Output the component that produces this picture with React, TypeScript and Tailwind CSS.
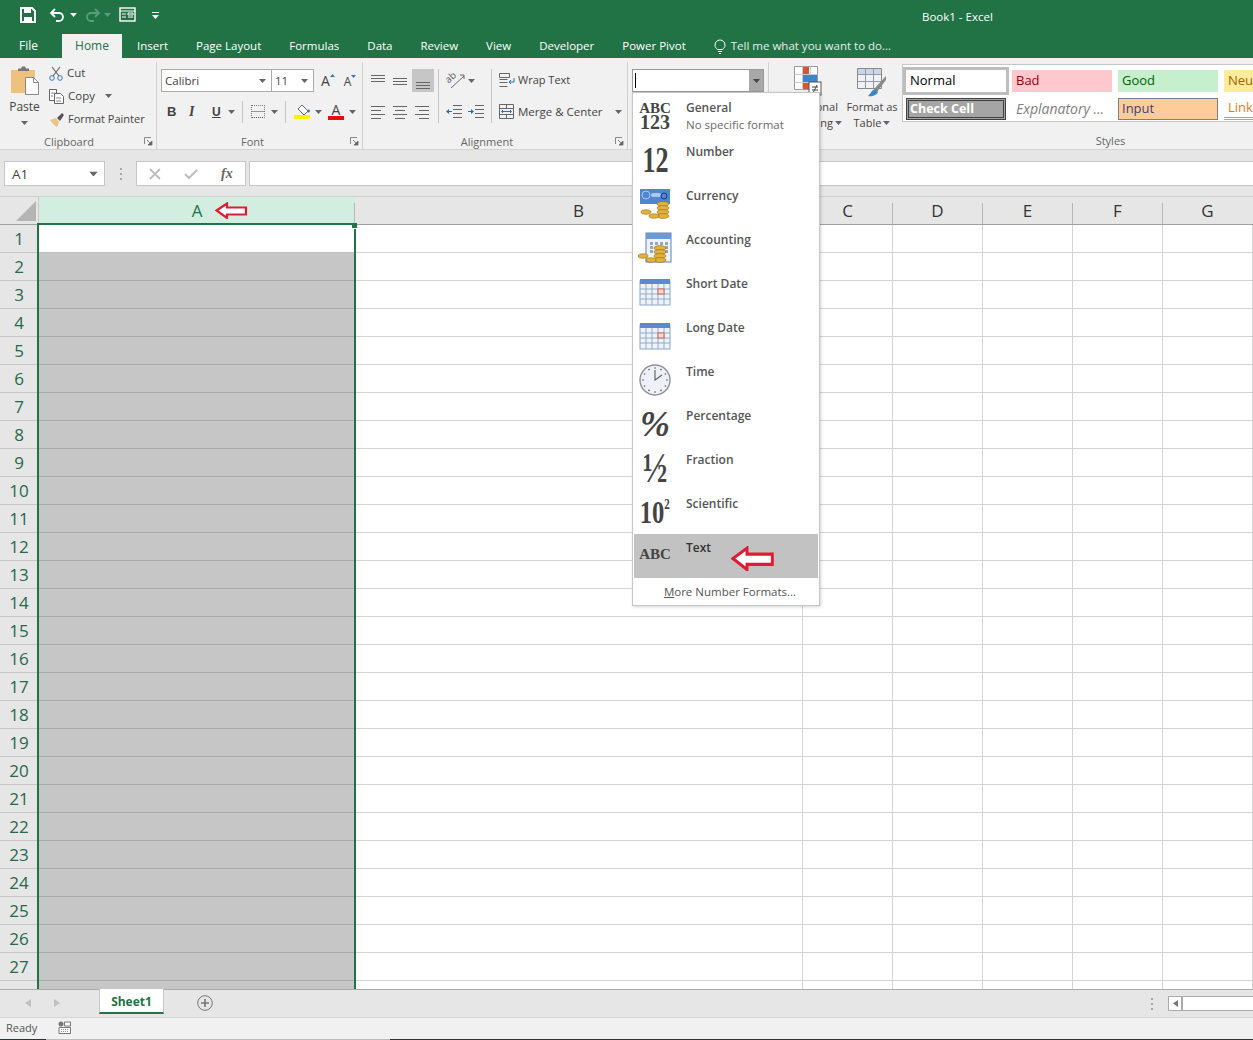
import React from "react";

const font = "font-['Open_Sans','Noto_Sans',sans-serif]";
const tabs = ["Insert","Page Layout","Formulas","Data","Review","View","Developer","Power Pivot"];

function Caret({ className = "", color = "#666" }: { className?: string; color?: string }) {
  return (
    <svg width="7" height="4" viewBox="0 0 7 4" className={className}><path d="M0 0h7L3.500 4z" fill={color} /></svg>
  );
}

function Launcher() {
  return (
    <svg width="9" height="9" viewBox="0 0 9 9" className="shrink-0">
      <path d="M.5 7V.5H7" fill="none" stroke="#888" />
      <path d="M3 3l4 4M8 4v4H4z" fill="#666" stroke="#666" strokeWidth=".8" />
    </svg>
  );
}

function Lines({ kind }: { kind: "t" | "m" | "b" | "l" | "c" | "r" }) {
  const ys = kind === "t" ? [2, 5, 8] : kind === "m" ? [5, 8, 11] : kind === "b" ? [9, 12, 15] : [2, 6, 10, 14];
  return (
    <svg width="15" height="16" viewBox="0 0 15 16">
      {ys.map((y, i) => {
        let x1 = 0, x2 = 14;
        if (kind === "l" && i % 2) x2 = 10;
        if (kind === "c" && i % 2) { x1 = 2; x2 = 12; }
        if (kind === "r" && i % 2) x1 = 4;
        return <line key={y} x1={x1} x2={x2} y1={y + 0.5} y2={y + 0.5} stroke="#666" />;
      })}
    </svg>
  );
}

function Indent({ flip }: { flip?: boolean }) {
  return (
    <svg width="17" height="14" viewBox="0 0 17 14">
      {[0.5, 4.5, 8.5, 12.5].map((y) => <line key={y} x1="7" x2="16" y1={y} y2={y} stroke="#666" />)}
      <path d={flip ? "M0 6h3V4l3 2.500L3 9V7H0z" : "M6 6H3V4L0 6.500 3 9V7h3z"} fill="#2a6fb8" />
    </svg>
  );
}

function PasteIcon() {
  return (
    <svg width="30" height="32" viewBox="0 0 30 32">
      <rect x="1" y="4" width="24" height="23" fill="#ecc27d" />
      <path d="M8 5V2.500h3L12 .5h3l1 2h3V5z" fill="#77777a" />
      <path d="M15.500 11.500h8l5 5v12h-13z" fill="#fff" stroke="#888" />
      <path d="M23.500 11.500v5h5" fill="none" stroke="#888" />
    </svg>
  );
}

function CalendarIcon() {
  return (
    <svg width="32" height="28" viewBox="0 0 32 28">
      <rect x="1" y="3" width="30" height="24" fill="#eef3fa" stroke="#8ea6c4" />
      <rect x="1" y="1" width="30" height="5" fill="#5b8ad0" />
      {[7, 13, 19, 25].map((x) => <line key={x} x1={x} x2={x} y1="6" y2="27" stroke="#94a9c4" />)}
      {[11, 16, 21].map((y) => <line key={y} x1="1" x2="31" y1={y} y2={y} stroke="#94a9c4" />)}
      <rect x="19" y="11" width="6" height="5" fill="#fbdcd6" stroke="#d2634f" />
    </svg>
  );
}

function Coins({ x, y }: { x: number; y: number }) {
  return (
    <g transform={`translate(${x} ${y})`}>
      {[0, 4, 8, 12].map((d) => <ellipse key={d} cx="22" cy={2 + d} rx="6" ry="2.400" fill="#e3b23c" stroke="#8f6b12" strokeWidth=".6" />)}
      <ellipse cx="5" cy="10" rx="5" ry="2.200" fill="#e3b23c" stroke="#8f6b12" strokeWidth=".6" />
      <ellipse cx="13" cy="14" rx="5" ry="2.200" fill="#e3b23c" stroke="#8f6b12" strokeWidth=".6" />
    </g>
  );
}

function CurrencyIcon() {
  return (
    <svg width="32" height="32" viewBox="0 0 32 32">
      <rect x="1" y="1" width="30" height="15" fill="#4f86cf" />
      <circle cx="7" cy="7" r="4" fill="none" stroke="#a9c8ef" />
      <rect x="12" y="5" width="10" height="4" rx="2" fill="#a9c8ef" />
      <circle cx="25" cy="8" r="3" fill="none" stroke="#123f7f" />
      <Coins x={2} y={14} />
    </svg>
  );
}

function AccountingIcon() {
  return (
    <svg width="34" height="32" viewBox="0 0 34 32">
      <rect x="8" y="1" width="25" height="29" fill="#eef3fa" stroke="#5b82b8" />
      <rect x="8" y="1" width="25" height="6" fill="#6c98d6" />
      {[10, 14, 18].map((y) => [12, 17, 22, 27].map((x) => <rect key={`${x}${y}`} x={x} y={y} width="3" height="3" fill="#97a6b8" />))}
      <Coins x={0} y={14} />
    </svg>
  );
}

function ClockIcon() {
  const ticks = [0, 30, 60, 90, 120, 150, 180, 210, 240, 270, 300, 330];
  return (
    <svg width="32" height="32" viewBox="0 0 32 32">
      <circle cx="16" cy="16" r="15" fill="#eef2f8" stroke="#8b8f96" strokeWidth="1.400" />
      {ticks.map((a) => <circle key={a} cx={16 + 12 * Math.sin((a * Math.PI) / 180)} cy={16 - 12 * Math.cos((a * Math.PI) / 180)} r=".8" fill="#555" />)}
      <path d="M16 6v10l7-5" fill="none" stroke="#666" strokeWidth="1.200" />
    </svg>
  );
}

function Arrow({ w, h }: { w: number; h: number }) {
  return (
    <svg width={w} height={h} viewBox="0 0 33 17" preserveAspectRatio="none" className="block">
      <path d="M1.500 8.500L12 1.500v4h19v7H12v3.500z" fill="#fff" stroke="#dc1e32" strokeWidth="2.200" />
    </svg>
  );
}

const serifIcon = "font-['Liberation_Serif',serif] font-bold text-[#444]";

const menu: { name: string; sub?: string; icon: React.ReactNode }[] = [
  { name: "General", sub: "No specific format", icon: <div className={`${serifIcon} text-[15px] leading-[14px] text-center -mt-[1px]`}>ABC<br /><span className="text-[20px] leading-[15px]">123</span></div> },
  { name: "Number", icon: <span className={`${serifIcon} text-[29px] leading-none scale-x-90 scale-y-125`}>12</span> },
  { name: "Currency", icon: <CurrencyIcon /> },
  { name: "Accounting", icon: <AccountingIcon /> },
  { name: "Short Date", icon: <CalendarIcon /> },
  { name: "Long Date", icon: <CalendarIcon /> },
  { name: "Time", icon: <ClockIcon /> },
  { name: "Percentage", icon: <span className={`${serifIcon} italic text-[36px] leading-none`}>%</span> },
  { name: "Fraction", icon: <span className={`${serifIcon} text-[33px] leading-none scale-y-125`}>½</span> },
  { name: "Scientific", icon: <span className={`${serifIcon} text-[29px] leading-none scale-x-[.85] scale-y-110`}>10<sup className="text-[13px] -top-[13px]">2</sup></span> },
];

function MenuItem({ item, active }: { item: (typeof menu)[number]; active?: boolean }) {
  return (
    <div className={`h-[44px] flex items-start pl-[4px] ${active ? "bg-[#c2c2c2]" : ""}`}>
      <div className="w-[34px] h-[44px] flex items-center justify-center shrink-0">{item.icon}</div>
      <div className="ml-[14px] pt-[5px] text-[12px] leading-[17px]">
        <div className={`font-semibold ${active ? "text-[#333]" : "text-[#555]"}`}>{item.name}</div>
        {item.sub && <div className="text-[#6a6a6a] text-[11.500px]">{item.sub}</div>}
      </div>
    </div>
  );
}

function Sep({ className = "h-[24px]" }: { className?: string }) {
  return <div className={`w-px bg-[#c6c6c6] shrink-0 ${className}`} />;
}

function GroupLabel({ text, pad }: { text: string; pad: string }) {
  return (
    <div className={`relative h-[16px] flex items-center justify-center text-[11px] text-[#666] pt-[2px] ${pad}`}>
      {text}
      <span className="absolute right-[3px] top-[4px]"><Launcher /></span>
    </div>
  );
}

function StyleCell({ text, className }: { text: string; className: string }) {
  return <div className={`w-[100px] h-[22px] shrink-0 flex items-center px-[4px] text-[13px] whitespace-nowrap overflow-hidden ${className}`}>{text}</div>;
}

const colWidths = [
  { n: "B", w: 448 }, { n: "C", w: 90 }, { n: "D", w: 90 }, { n: "E", w: 90 }, { n: "F", w: 90 }, { n: "G", w: 90 },
];

export default function App() {
  const rows = Array.from({ length: 28 }, (_, i) => i + 1);
  return (
    <div className={`${font} w-[1253px] h-[1040px] flex flex-col overflow-hidden bg-white relative text-[#444]`}>
      {/* title bar */}
      <div className="h-[34px] bg-[#217346] flex items-center shrink-0 text-white relative">
        <svg width="16" height="16" viewBox="0 0 16 16" className="ml-[20px] -mt-[5px]">
          <path d="M1 1h11l3 3v11H1z" fill="none" stroke="#fff" strokeWidth="2" />
          <rect x="4" y="1" width="7" height="5" fill="#fff" />
          <rect x="4" y="10" width="8" height="5" fill="#fff" />
        </svg>
        <svg width="15" height="14" viewBox="0 0 15 14" className="ml-[14px] -mt-[5px]">
          <path d="M5 1L1 5l4 4M1 5h8a4 4 0 0 1 0 8H6" fill="none" stroke="#fff" strokeWidth="1.800" />
        </svg>
        <Caret color="#fff" className="ml-[5px] -mt-[5px]" />
        <svg width="15" height="14" viewBox="0 0 15 14" className="ml-[8px] -mt-[5px]">
          <path d="M10 1l4 4-4 4M14 5H6a4 4 0 0 0 0 8h3" fill="none" stroke="#5c9b7c" strokeWidth="1.800" />
        </svg>
        <Caret color="#5c9b7c" className="ml-[4px] -mt-[5px]" />
        <svg width="17" height="15" viewBox="0 0 17 15" className="ml-[8px] -mt-[5px]">
          <rect x="1" y="1" width="15" height="13" fill="none" stroke="#fff" strokeWidth="1.400" />
          <path d="M1 4h15M3 7h4M3 10h4M9 6h5v2H9zM9 10h5" stroke="#fff" fill="none" />
        </svg>
        <svg width="7" height="7" viewBox="0 0 7 7" className="ml-[16px] -mt-[3px]">
          <path d="M0 0h7v1H0zM0 3h7L3.500 7z" fill="#fff" />
        </svg>
        <span className="absolute left-[922px] top-[10px] text-[11.500px] leading-[14px]">Book1 - Excel</span>
      </div>
      {/* tabs */}
      <div className="h-[24px] bg-[#217346] flex items-end text-white text-[11.500px] shrink-0 relative">
        <div className="w-[62px] pl-[19px] h-[24px] flex items-center text-[12px]">File</div>
        <div className="w-[60px] h-[24px] bg-[#f1f1f1] text-[#217346] flex items-center justify-center text-[12px]">Home</div>
        <div className="flex h-[24px] items-center ml-[15px] gap-[28px]">
          {tabs.map((t) => <span key={t}>{t}</span>)}
        </div>
        <div className="flex items-center h-[24px] ml-[28px] gap-[5px]">
          <svg width="12" height="15" viewBox="0 0 12 15"><path d="M3.500 10.500C2 9 1 8 1 6a5 5 0 0 1 10 0c0 2-1 3-2.500 4.500zM4 12.500h4M5 14.500h2" fill="none" stroke="#fff" /></svg>
          <span className="text-[#e4efe9]">Tell me what you want to do...</span>
        </div>
      </div>
      {/* ribbon */}
      <div className="h-[92px] bg-[#f1f1f1] flex shrink-0 border-b border-[#d4d4d4] text-[11.500px] relative">
        {/* clipboard */}
        <div className="w-[157px] shrink-0 border-r border-[#d0d0d0] mt-[4px] flex flex-col">
          <div className="flex-1 flex">
            <div className="w-[49px] flex flex-col items-center">
              <div className="mt-[4px]"><PasteIcon /></div>
              <div className="mt-[1px] leading-[16px] text-[12px]">Paste</div>
              <Caret className="mt-[6px]" />
            </div>
            <div className="flex flex-col pt-[2px] gap-[5px] leading-[18px]">
              <div className="flex items-center gap-[4px]">
                <svg width="14" height="15" viewBox="0 0 14 15"><path d="M3 1l7 9M11 1l-7 9" stroke="#666" strokeWidth="1.200" /><circle cx="3" cy="12" r="2.300" fill="none" stroke="#3a78b8" /><circle cx="11" cy="12" r="2.300" fill="none" stroke="#3a78b8" /></svg>
                <span>Cut</span>
              </div>
              <div className="flex items-center gap-[4px]">
                <svg width="15" height="15" viewBox="0 0 15 15"><path d="M.5.500h7v11h-7z" fill="#fff" stroke="#666" /><path d="M5.500 4.500h6l3 3v7h-9z" fill="#fff" stroke="#666" /><path d="M2 4h4M2 7h2M7 9h5M7 12h5" stroke="#888" /></svg>
                <span>Copy</span>
                <Caret className="ml-[6px]" />
              </div>
              <div className="flex items-center gap-[3px]">
                <svg width="16" height="15" viewBox="0 0 16 15"><path d="M1 8l6-2 3 4-2 5c-2-1-5-4-7-7z" fill="#e7c587" /><path d="M8 6l5-5 2 2-4 6z" fill="#555" /></svg>
                <span className="whitespace-nowrap text-[11px]">Format Painter</span>
              </div>
            </div>
          </div>
          <GroupLabel text="Clipboard" pad="pr-[18px]" />
        </div>
        {/* font */}
        <div className="w-[206px] shrink-0 border-r border-[#d0d0d0] mt-[4px] flex flex-col">
          <div className="flex-1 pl-[4px] pt-[7px]">
            <div className="flex items-center">
              <div className="w-[111px] h-[23px] bg-white border border-[#ababab] flex items-center justify-between px-[3px]">
                <span>Calibri</span><Caret className="mr-[2px]" />
              </div>
              <div className="w-[43px] h-[23px] bg-white border border-[#ababab] -ml-px flex items-center justify-between px-[3px]">
                <span>11</span><Caret className="mr-[2px]" />
              </div>
              <span className="ml-[7px] text-[14px] leading-none relative">A<svg width="5" height="3" viewBox="0 0 5 3" className="absolute -right-[5px] top-0"><path d="M0 3h5L2.500 0z" fill="#3a78b8" /></svg></span>
              <span className="ml-[14px] text-[12px] leading-none relative top-[1px]">A<svg width="5" height="3" viewBox="0 0 5 3" className="absolute -right-[5px] -top-[1px]"><path d="M0 0h5L2.500 3z" fill="#3a78b8" /></svg></span>
            </div>
            <div className="flex items-center mt-[8px] h-[23px] pl-[6px]">
              <span className="font-['Liberation_Sans',sans-serif] font-bold text-[13px] w-[22px]">B</span>
              <span className="font-['Liberation_Serif',serif] font-bold italic text-[14px] w-[23px]">I</span>
              <span className="font-['Liberation_Sans',sans-serif] font-bold text-[12px] underline w-[16px]">U</span>
              <Caret />
              <Sep className="h-[22px] ml-[7px]" />
              <div className="ml-[8px] w-[14px] h-[13px] border border-dotted border-[#777] border-b-[#555] bg-[linear-gradient(#999,#999)] bg-[length:100%_1px] bg-center bg-no-repeat" />
              <Caret className="ml-[6px]" />
              <Sep className="h-[22px] ml-[7px]" />
              <div className="ml-[8px] flex flex-col items-center w-[16px]">
                <svg width="15" height="11" viewBox="0 0 15 11"><path d="M7 1l6 6-4 4-6-6z" fill="#fff" stroke="#666" /><circle cx="13.500" cy="7" r="1.500" fill="#3a78b8" /></svg>
                <div className="w-[16px] h-[4px] bg-[#fff200]" />
              </div>
              <Caret className="ml-[5px]" />
              <div className="ml-[6px] flex flex-col items-center w-[16px] leading-[11px]">
                <span className="text-[14px] leading-[12px]">A</span>
                <div className="w-[16px] h-[4px] bg-[#e01010]" />
              </div>
              <Caret className="ml-[5px]" />
            </div>
          </div>
          <GroupLabel text="Font" pad="pr-[14px]" />
        </div>
        {/* alignment */}
        <div className="w-[265px] shrink-0 border-r border-[#d0d0d0] mt-[4px] flex flex-col">
          <div className="flex-1 pl-[8px] pt-[7px] flex">
            <div className="flex flex-col gap-[8px] w-[72px]">
              <div className="flex items-center h-[23px] gap-[7px]">
                <Lines kind="t" /><Lines kind="m" />
                <div className="bg-[#c6c6c6] w-[22px] h-[23px] flex items-center justify-center -ml-[3px]"><Lines kind="b" /></div>
              </div>
              <div className="flex items-center h-[23px] gap-[7px]">
                <Lines kind="l" /><Lines kind="c" /><Lines kind="r" />
              </div>
            </div>
            <Sep className="h-[54px] -ml-[5px]" />
            <div className="flex flex-col gap-[8px] w-[52px] pl-[7px]">
              <div className="flex items-center h-[23px] gap-[3px]">
                <svg width="19" height="16" viewBox="0 0 19 16" overflow="visible"><path d="M5 15L18 3" stroke="#666" /><path d="M14 2h4v4" fill="none" stroke="#666" /><text x="0" y="0" fontSize="9.500" fill="#555" transform="translate(2.500 10.500) rotate(-42)" fontFamily="Open Sans">ab</text></svg>
                <Caret />
              </div>
              <div className="flex items-center h-[23px] gap-[5px]"><Indent /><Indent flip /></div>
            </div>
            <Sep className="h-[54px]" />
            <div className="flex flex-col gap-[8px] pl-[7px]">
              <div className="flex items-center h-[23px] gap-[3px]">
                <svg width="16" height="15" viewBox="0 0 16 15"><path d="M.5.500h10v4H.5zM.5 6.500h8M.5 9.500h8M.5 13.500h8" fill="none" stroke="#666" /><path d="M15 5v4h-5M12 7l-2 2 2 2" fill="none" stroke="#2a6fb8" /></svg>
                <span className="text-[11px]">Wrap Text</span>
              </div>
              <div className="flex items-center h-[23px] gap-[3px]">
                <svg width="16" height="15" viewBox="0 0 16 15"><path d="M.5.500h14v14H.5zM.5 4.500h14M.5 10.500h14M7.500.500v4M7.500 10.500v4" fill="none" stroke="#666" /><path d="M3 7.500h9M4 6l-1.500 1.500L4 9M11 6l1.500 1.500L11 9" fill="none" stroke="#2a6fb8" /></svg>
                <span className="whitespace-nowrap">Merge &amp; Center</span>
                <Caret className="ml-[9px]" />
              </div>
            </div>
          </div>
          <GroupLabel text="Alignment" pad="pr-[16px]" />
        </div>
        {/* number */}
        <div className="w-[141px] shrink-0 border-r border-[#d0d0d0] mt-[4px] mb-[2px] pt-[7px] pl-[4px]">
          <div className="w-[132px] h-[23px] bg-white border border-[#9a9a9a] flex justify-between items-stretch">
            <div className="w-px h-[15px] bg-black ml-[2px] self-center" />
            <div className="w-[14px] bg-[#a8a8a8] flex items-center justify-center"><Caret color="#444" /></div>
          </div>
        </div>
        {/* conditional */}
        <div className="w-[133px] shrink-0 flex relative mt-[4px]">
          <div className="w-[77px] flex flex-col items-end text-[11px]">
            <svg width="28" height="30" viewBox="0 0 28 30" className="mt-[4px] mr-[24px]">
              <path d="M.5.500h23v23H.5z" fill="#fff" stroke="#999" />
              <path d="M8.500.500v23M16.500.500v23M.5 8.500h23M.5 16.500h23" stroke="#ccc" />
              <rect x="9" y="1" width="6" height="7" fill="#d65532" />
              <rect x="9" y="9" width="14" height="7" fill="#3f83c8" />
              <rect x="9" y="17" width="9" height="6" fill="#d65532" />
              <rect x="15" y="16" width="12" height="13" fill="#fff" stroke="#555" />
              <path d="M18 21h6M18 24h6M23 19l-4 8" stroke="#444" />
            </svg>
            <div className="text-right leading-[16px] whitespace-nowrap pt-[3px] pr-[4px]">
              <div className="pr-[4px]">onal</div>
              <div className="flex items-center justify-end gap-[2px]">ng <Caret /></div>
            </div>
          </div>
          <div className="w-[52px] flex flex-col items-center text-[11px]">
            <svg width="30" height="30" viewBox="0 0 30 30" className="mt-[6px]">
              <path d="M.5.500h24v20H.5z" fill="#eef2f8" stroke="#888" />
              <rect x="1" y="1" width="23" height="5" fill="#c8d6ea" />
              <path d="M8.500.500v20M16.500.500v20M.5 6.500h24M.5 13.500h24" stroke="#999" />
              <path d="M29 8L17 21l3 3L29 12z" fill="#8a8a8a" />
              <path d="M18 21c-3 1-4 4-7 7 4 1 9-1 10-4z" fill="#3f83c8" />
            </svg>
            <div className="leading-[16px] text-center whitespace-nowrap mt-[1px]">
              <div>Format as</div>
              <div className="flex items-center justify-center gap-[2px]">Table <Caret /></div>
            </div>
          </div>
        </div>
        {/* styles */}
        <div className="flex-1 mt-[4px] flex flex-col min-w-0">
          <div className="h-[61px] mt-[2px] border border-[#c6c6c6] border-r-0 bg-white overflow-hidden flex flex-col pl-[3px] pt-[5px] gap-[6px]">
            <div className="flex gap-[6px]">
              <StyleCell text="Normal" className="bg-white text-black outline-[3px] outline-[#bdbdbd]" />
              <StyleCell text="Bad" className="bg-[#ffc7ce] text-[#9c0006]" />
              <StyleCell text="Good" className="bg-[#c6efce] text-[#006100]" />
              <StyleCell text="Neu" className="bg-[#ffeb9c] text-[#9c6500]" />
            </div>
            <div className="flex gap-[6px]">
              <StyleCell text="Check Cell" className="bg-[#a5a5a5] text-white font-bold border-[3px] border-double border-[#3f3f3f] !px-[1px] !text-[12.500px]" />
              <StyleCell text="Explanatory ..." className="bg-white text-[#7f7f7f] italic !text-[14px] -translate-y-px" />
              <StyleCell text="Input" className="bg-[#ffcc99] text-[#3f3f76] border border-[#7f7f7f] !px-[3px]" />
              <StyleCell text="Link" className="text-[#dd7d1d] border-b-[3px] border-double border-[#e09a3c]" />
            </div>
          </div>
          <div className="flex-1 flex items-center justify-center text-[11px] text-[#666] pl-[66px] pt-[11px]">Styles</div>
        </div>
      </div>
      {/* formula bar */}
      <div className="h-[47px] bg-[#e6e6e6] shrink-0 flex items-start pt-[11px] border-b border-[#d0d0d0] text-[13px]">
        <div className="ml-[4px] w-[101px] h-[25px] bg-white border border-[#c6c6c6] flex items-center justify-between pl-[7px] pr-[6px]">
          <span className="text-[13.500px] pt-[1px]">A1</span><Caret color="#666" className="mr-[1px] scale-125" />
        </div>
        <div className="w-[31px] h-[25px] flex flex-col items-center justify-center gap-[3px]">
          {[0, 1, 2].map((i) => <span key={i} className="w-[2px] h-[2px] bg-[#a8a8a8]" />)}
        </div>
        <div className="w-[110px] h-[25px] bg-white border border-[#c6c6c6] flex items-center">
          <svg width="12" height="12" viewBox="0 0 12 12" className="ml-[12px]"><path d="M1 1l10 10M11 1L1 11" stroke="#bdbdbd" strokeWidth="1.800" /></svg>
          <svg width="14" height="12" viewBox="0 0 14 12" className="ml-[23px]"><path d="M1 6l4 4 8-8" fill="none" stroke="#bdbdbd" strokeWidth="2" /></svg>
          <span className="ml-[23px] font-['Liberation_Serif',serif] italic font-bold text-[14px] text-[#666]">fx</span>
        </div>
        <div className="ml-[3px] flex-1 h-[25px] bg-white border border-[#c6c6c6] border-r-0" />
      </div>
      {/* sheet */}
      <div className="flex-1 min-h-0 overflow-hidden relative bg-white">
        <div className="h-[28px] flex bg-[#e6e6e6] border-b border-[#a0a0a0]">
          <div className="w-[38px] shrink-0 flex items-end justify-end pb-[3px] pr-[2px]">
            <svg width="20" height="20" viewBox="0 0 20 20"><path d="M20 0v20H0z" fill="#b4b4b4" /></svg>
          </div>
          <div className="w-[316px] shrink-0 bg-[#d2eee0] text-[#217346] text-[17px] flex items-center justify-center border-l border-[#c9c9c9] pr-[1px]">
            <span className="relative right-[-1px]">A</span>
          </div>
          {colWidths.map((c) => (
            <div key={c.n} style={{ width: c.w }} className="shrink-0 text-[17px] text-[#333] flex items-center justify-center border-l border-[#b8b8b8] self-end h-[21px]">
              <span className="-mt-[5px]">{c.n}</span>
            </div>
          ))}
        </div>
        {rows.map((r) => (
          <div key={r} className="h-[28px] flex">
            <div className="w-[38px] shrink-0 bg-[#e6e6e6] text-[#27694a] text-[17px] flex items-center justify-center border-b border-[#c6c6c6] pt-[1px]">{r < 28 ? r : ""}</div>
            <div className={`w-[316px] shrink-0 border-b ${r === 1 ? "bg-white border-[#c0c0c0]" : "bg-[#c6c6c6] border-[#aaaaaa]"}`} />
            {colWidths.map((c) => (
              <div key={c.n} style={{ width: c.w + (c.n === "B" ? 1 : 0) }} className="shrink-0 border-b border-r border-[#d4d4d4]" />
            ))}
          </div>
        ))}
        {/* selection outline */}
        <div className="absolute left-[37px] top-[26px] w-[319px] h-[800px] border-2 border-b-0 border-[#217346]" />
        <div className="absolute left-[352px] top-[26px] w-[5px] h-[6px] bg-[#217346] border-b border-white" />
        {/* arrow on header */}
        <div className="absolute left-[215px] top-[5px]"><Arrow w={33} h={17} /></div>
      </div>
      {/* sheet tabs */}
      <div className="h-[28px] bg-[#e6e6e6] border-t border-[#ababab] shrink-0 flex items-start relative">
        <svg width="6" height="8" viewBox="0 0 6 8" className="ml-[25px] mt-[9px]"><path d="M6 0v8L0 4z" fill="#c0c0c0" /></svg>
        <svg width="6" height="8" viewBox="0 0 6 8" className="ml-[23px] mt-[9px]"><path d="M0 0v8l6-4z" fill="#c0c0c0" /></svg>
        <div className="ml-[39px] -mt-px w-[65px] h-[25px] bg-white border-x border-b-2 border-[#217346] border-x-[#c6c6c6] text-[#217346] font-bold text-[12px] flex items-center justify-center pt-[3px]">Sheet1</div>
        <svg width="16" height="16" viewBox="0 0 16 16" className="ml-[33px] mt-[5px]"><circle cx="8" cy="8" r="7.300" fill="none" stroke="#777" /><path d="M4 8h8M8 4v8" stroke="#777" strokeWidth="1.600" /></svg>
        <div className="absolute left-[1151px] top-[8px] flex flex-col gap-[3px]">
          {[0, 1, 2].map((i) => <span key={i} className="w-[2px] h-[2px] bg-[#a8a8a8]" />)}
        </div>
        <div className="absolute left-[1168px] top-[6px] right-0 h-[15px] bg-white border border-r-0 border-[#ababab] flex">
          <div className="w-[14px] border-r-2 border-[#ababab] flex items-center justify-center">
            <svg width="5" height="7" viewBox="0 0 5 7"><path d="M5 0v7L0 3.500z" fill="#777" /></svg>
          </div>
        </div>
      </div>
      {/* status */}
      <div className="h-[22px] bg-[#f1f1f1] border-t border-[#d4d4d4] shrink-0 flex items-start text-[11px] text-[#555]">
        <span className="ml-[6px] mt-[2px] leading-[16px]">Ready</span>
        <svg width="13" height="13" viewBox="0 0 13 13" className="ml-[21px] mt-[3px]"><circle cx="3" cy="3" r="2.500" fill="#777" /><path d="M1 6.500h11.500v6H1zM6.500 1h6v4h-6z" fill="#fff" stroke="#777" /><path d="M3 8.500h8M3 10.500h8" stroke="#999" strokeDasharray="1 1" /></svg>
      </div>
      <div className="h-px shrink-0 flex bg-[#26343a]">
        <div className="ml-[46px] w-[344px] bg-[#bcbcbc]" />
      </div>
      {/* number format menu */}
      <div className="absolute left-[632px] top-[92px] w-[188px] h-[514px] bg-white border border-[#c6c6c6] shadow-[1px_1px_3px_rgba(0,0,0,0.18)] p-px">
        {menu.map((m) => <MenuItem key={m.name} item={m} />)}
        <div className="relative">
          <MenuItem active item={{ name: "Text", icon: <span className={`${serifIcon} text-[15px] leading-none -mt-[3px]`}>ABC</span> }} />
          <div className="absolute left-[97px] top-[12px]"><Arrow w={44} h={25} /></div>
        </div>
        <div className="h-[27px] flex items-center justify-center text-[11.500px] text-[#555] pl-[8px]"><span><span className="underline">M</span>ore Number Formats...</span></div>
      </div>
    </div>
  );
}
